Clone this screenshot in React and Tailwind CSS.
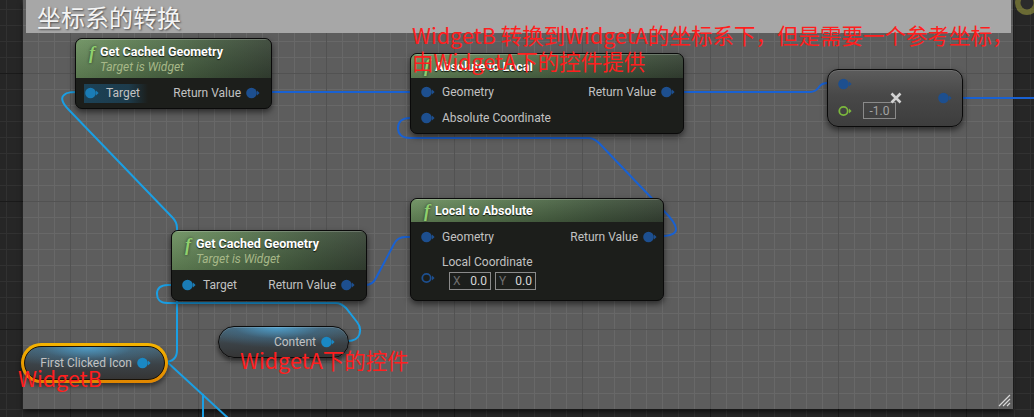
import React from 'react';

const Pin = ({ color = '#1d4f8f', hollow = false }) => (
  <svg width="14" height="12" viewBox="0 0 14 12" className="shrink-0">
    {hollow ? (
      <circle cx="5.5" cy="6" r="4.2" fill="none" stroke={color} strokeWidth="1.8" />
    ) : (
      <circle cx="5.5" cy="6" r="5.3" fill={color} />
    )}
    <path d="M11 3.6 L13.6 6 L11 8.4 Z" fill={color} />
  </svg>
);

const Fn = () => (
  <span className="font-['Liberation_Serif',serif] italic font-bold text-[18px] leading-none text-[#8fd06e] [text-shadow:0_0_3px_rgba(0,0,0,0.6)]">
    f
  </span>
);

const label = 'text-[12px] leading-none text-[#c2c2c2]';
const title = 'text-[12.5px] font-bold leading-[15px] text-white [text-shadow:0_1px_1px_rgba(0,0,0,0.8)]';
const header =
  'bg-[image:linear-gradient(to_bottom,rgba(255,255,255,0.06),rgba(0,0,0,0.18)),linear-gradient(to_right,#6d9160_0%,#58774f_35%,#42573e_75%,#394637_100%)] shadow-[inset_0_1px_0_rgba(255,255,255,0.2)]';
const node = 'absolute rounded-[7px] border border-[#0a0a0a] bg-[#1c1e1b] shadow-[0_3px_6px_rgba(0,0,0,0.55)] overflow-hidden';
const note = "absolute font-['Noto_Sans_CJK_SC',sans-serif] text-[21.5px] leading-[26px] text-[#ff1e1e] whitespace-nowrap";

export default function App() {
  return (
    <div className="relative w-[1034px] h-[417px] overflow-hidden bg-[#262626] bg-[image:linear-gradient(to_right,#1a1a1a_1px,transparent_1px),linear-gradient(to_bottom,#1a1a1a_1px,transparent_1px),linear-gradient(to_right,#313131_1px,transparent_1px),linear-gradient(to_bottom,#313131_1px,transparent_1px)] bg-[size:128px_128px,128px_128px,16px_16px,16px_16px] bg-[position:70px_0,0_73px,6px_0,0_9px] font-['Roboto',sans-serif]">
      {/* comment box */}
      <div className="absolute left-[23px] top-0 w-[990px] h-[409px] bg-[#5d5d5d] bg-[image:linear-gradient(to_right,#525252_1px,transparent_1px),linear-gradient(to_bottom,#525252_1px,transparent_1px),linear-gradient(to_right,#686868_1px,transparent_1px),linear-gradient(to_bottom,#686868_1px,transparent_1px)] bg-[size:128px_128px,128px_128px,16px_16px,16px_16px] bg-[position:47px_0,0_73px,15px_0,0_9px] shadow-[0_3px_5px_rgba(0,0,0,0.6)]">
        <div className="ml-[3px] w-[985px] h-[33px] bg-[#a7a7a7] flex items-center pl-[11px]">
          <span className="font-['Noto_Sans_CJK_SC',sans-serif] text-[24px] leading-none text-[#f4f4f4] [text-shadow:1px_1px_2px_rgba(0,0,0,0.55)]">
            坐标系的转换
          </span>
        </div>
        <svg className="absolute right-[2px] bottom-[2px]" width="14" height="14" viewBox="0 0 14 14">
          <path d="M2 13 L13 2 M6 13 L13 6 M10 13 L13 10" stroke="#d8d8d8" strokeWidth="1.2" />
        </svg>
      </div>

      {/* cursor glow */}
      <svg className="absolute left-[1012px] top-[-12px]" width="30" height="30" viewBox="0 0 30 30">
        <circle cx="15" cy="15" r="12" fill="rgba(190,190,70,0.45)" />
        <circle cx="15" cy="15" r="6.5" fill="#2b2b2b" />
      </svg>

      {/* wires */}
      <svg className="absolute inset-0" width="1034" height="417" viewBox="0 0 1034 417" fill="none">
        <g stroke="#1a9fe4" strokeWidth="2">
          <path d="M143 362 L164 362 C172 362 177 358 177 350 L177 228 C177 223 175 220 172 217 L69 110 C63 104 60 98 64 95 C67 92 72 92 80 92 L91 92" />
          <path d="M188 285 L168 285 C160 285 157 289 157 294 C157 299 160 303 167 303 L336 303 C340 303 343 305 346 308 L357 322 C361 327 361 333 358 337 C355 341 350 341 343 341 L333 341" />
          <path d="M166 361 L228 418" />
          <path d="M203 394 L203 418" />
        </g>
        <g stroke="#1961d2" strokeWidth="2">
          <path d="M258 92 L428 92" />
          <path d="M672 92 L810 92 C815 92 817 90 819 87 C821 84 823 83 828 83 L843 83" />
          <path d="M948 98 L1034 98" />
          <path d="M427 118 L410 118 C402 118 398 122 398 128 C398 134 402 138 410 138 L588 138 C593 138 596 140 599 143 L664 211 C670 217 676 224 676 229 C676 234 671 236 660 236 L643 236" />
          <path d="M350 285 L366 285 C371 285 374 282 376 278 L394 244 C396 240 399 237 405 237 L427 237" />
        </g>
      </svg>

      {/* Get Cached Geometry (top) */}
      <div className={`${node} left-[75px] top-[38px] w-[197px] h-[71px]`}>
        <div className={`${header} h-[39px] flex items-start gap-[5px] pl-[13px] pt-[5px]`}>
          <Fn />
          <div className="flex flex-col">
            <span className={title}>Get Cached Geometry</span>
            <span className="text-[12px] italic leading-[16px] text-[#a7b888]">Target is Widget</span>
          </div>
        </div>
        <div className="flex items-center justify-between h-[30px] pr-[11px]">
          <div className="flex items-center gap-[7px] ml-[8px] pl-[1px] w-[64px] h-[19px] bg-[linear-gradient(to_right,#1c4257,#1d3b4b_70%,rgba(29,59,75,0))]">
            <Pin color="#1a7cb6" />
            <span className={label}>Target</span>
          </div>
          <div className="flex items-center gap-[5px]">
            <span className={label}>Return Value</span>
            <Pin color="#1d4f8f" />
          </div>
        </div>
      </div>

      {/* Absolute to Local */}
      <div className={`${node} left-[410px] top-[53px] w-[274px] h-[81px]`}>
        <div className={`${header} h-[24px] flex items-center gap-[5px] pl-[13px]`}>
          <Fn />
          <span className={title}>Absolute to Local</span>
        </div>
        <div className="flex flex-col pt-[1px]">
          <div className="flex items-center justify-between h-[26px] pl-[10px] pr-[8px]">
            <div className="flex items-center gap-[7px]">
              <Pin color="#1d4f8f" />
              <span className={label}>Geometry</span>
            </div>
            <div className="flex items-center gap-[5px]">
              <span className={label}>Return Value</span>
              <Pin color="#1d4f8f" />
            </div>
          </div>
          <div className="flex items-center h-[26px] pl-[10px] gap-[7px]">
            <Pin color="#1d4f8f" />
            <span className={label}>Absolute Coordinate</span>
          </div>
        </div>
      </div>

      {/* Multiply */}
      <div className="absolute left-[827px] top-[69px] w-[136px] h-[58px] rounded-[11px] border border-[#0a0a0a] bg-[linear-gradient(to_bottom,#5c5c5c,#484848_45%,#3d3d3d)] shadow-[0_3px_6px_rgba(0,0,0,0.55),inset_0_1px_0_rgba(255,255,255,0.12)] flex items-center justify-between pl-[10px] pr-[10px]">
        <div className="flex flex-col gap-[12px] pt-[1px]">
          <div className="h-[12px] flex items-center">
            <Pin color="#1d4f8f" />
          </div>
          <div className="flex items-center gap-[11px] h-[17px]">
            <Pin color="#7cb83d" hollow />
            <div className="w-[33px] h-[17px] border border-[#8a8a8a] flex items-center justify-center text-[12px] text-[#a3a3a3]">
              -1.0
            </div>
          </div>
        </div>
        <Pin color="#1d4f8f" />
        <svg className="absolute left-[62px] top-[22px]" width="12" height="12" viewBox="0 0 12 12">
          <path d="M1.5 1.5 L10.5 10.5 M10.5 1.5 L1.5 10.5" stroke="#d2d2d2" strokeWidth="2.6" />
        </svg>
      </div>

      {/* Local to Absolute */}
      <div className={`${node} left-[410px] top-[198px] w-[254px] h-[103px]`}>
        <div className={`${header} h-[23px] flex items-center gap-[5px] pl-[13px]`}>
          <Fn />
          <span className={title}>Local to Absolute</span>
        </div>
        <div className="flex items-center justify-between h-[28px] pl-[10px] pr-[6px] pt-[2px]">
          <div className="flex items-center gap-[7px]">
            <Pin color="#1d4f8f" />
            <span className={label}>Geometry</span>
          </div>
          <div className="flex items-center gap-[5px]">
            <span className={label}>Return Value</span>
            <Pin color="#1d4f8f" />
          </div>
        </div>
        <div className="flex items-center pl-[10px] gap-[7px] pt-[6px]">
          <div className="mt-[10px]">
            <Pin color="#1d4f8f" hollow />
          </div>
          <div className="flex flex-col gap-[4px]">
            <span className={label}>Local Coordinate</span>
            <div className="flex gap-[4px] ml-[7px]">
              <div className="w-[42px] h-[18px] border border-[#8a8a8a] flex items-center justify-between px-[3px] text-[12px]">
                <span className="text-[#6f6f6f]">X</span>
                <span className="text-[#d6d6d6]">0.0</span>
              </div>
              <div className="w-[41px] h-[18px] border border-[#8a8a8a] flex items-center justify-between px-[3px] text-[12px]">
                <span className="text-[#6f6f6f]">Y</span>
                <span className="text-[#d6d6d6]">0.0</span>
              </div>
            </div>
          </div>
        </div>
      </div>

      {/* Get Cached Geometry (bottom) */}
      <div className={`${node} left-[171px] top-[230px] w-[196px] h-[71px]`}>
        <div className={`${header} h-[39px] flex items-start gap-[5px] pl-[13px] pt-[5px]`}>
          <Fn />
          <div className="flex flex-col">
            <span className={title}>Get Cached Geometry</span>
            <span className="text-[12px] italic leading-[16px] text-[#a7b888]">Target is Widget</span>
          </div>
        </div>
        <div className="flex items-center justify-between h-[30px] pl-[10px] pr-[11px]">
          <div className="flex items-center gap-[7px]">
            <Pin color="#1a7cb6" />
            <span className={label}>Target</span>
          </div>
          <div className="flex items-center gap-[5px]">
            <span className={label}>Return Value</span>
            <Pin color="#1d4f8f" />
          </div>
        </div>
      </div>

      {/* Content variable */}
      <div className="absolute left-[218px] top-[326px] w-[131px] h-[32px] rounded-full border-[1.5px] border-[#0c0c0c] bg-[image:radial-gradient(ellipse_60%_70%_at_45%_0%,rgba(80,170,220,0.85),rgba(60,120,160,0.35)_55%,rgba(0,0,0,0)_100%),linear-gradient(to_bottom,#4a6675,#3b4247_55%,#353535)] shadow-[0_3px_5px_rgba(0,0,0,0.55),inset_0_1px_0_rgba(255,255,255,0.15)] flex items-center justify-end gap-[5px] pr-[13px]">
        <span className={label}>Content</span>
        <Pin color="#1a88c4" />
      </div>

      {/* First Clicked Icon variable */}
      <div className="absolute left-[21px] top-[343px] w-[147px] h-[40px] rounded-full p-[3px] bg-[linear-gradient(to_bottom,#f5b400,#e08600)] shadow-[0_3px_5px_rgba(0,0,0,0.5)]">
        <div className="w-full h-full rounded-full border border-[#1a1206] bg-[image:radial-gradient(ellipse_60%_70%_at_45%_0%,rgba(80,170,220,0.8),rgba(60,120,160,0.3)_55%,rgba(0,0,0,0)_100%),linear-gradient(to_bottom,#4a6675,#3b4247_55%,#353535)] flex items-center justify-end gap-[5px] pr-[13px]">
          <span className={label}>First Clicked Icon</span>
          <Pin color="#1a88c4" />
        </div>
      </div>

      {/* annotations */}
      <div className={`${note} left-[412px] top-[22px]`}>
        <div>WidgetB 转换到WidgetA的坐标系下，但是需要一个参考坐标，</div>
        <div>由WidgetA下的控件提供</div>
      </div>
      <div className={`${note} left-[240px] top-[347px]`}>WidgetA下的控件</div>
      <div className={`${note} left-[18px] top-[365px]`}>WidgetB</div>
    </div>
  );
}
